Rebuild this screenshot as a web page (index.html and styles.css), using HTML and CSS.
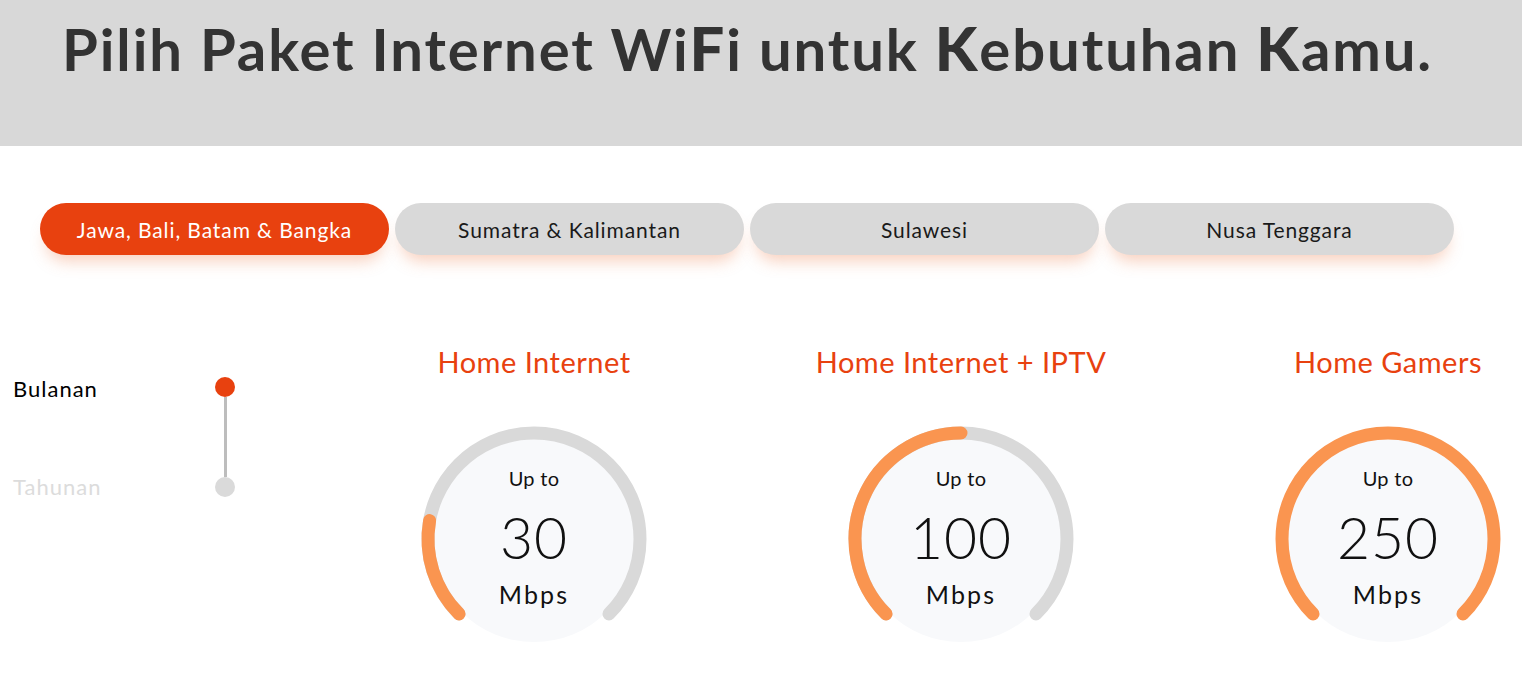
FILE: index.html
```html
<!DOCTYPE html>
<html lang="id">
<head>
<meta charset="utf-8">
<title>Pilih Paket Internet WiFi</title>
<link rel="stylesheet" href="styles.css">
</head>
<body>
<header class="hero">
  <h1 class="hero-title">Pilih Paket Internet Wi<span class="big">F</span>i untuk <span class="big">K</span>ebutuhan <span class="big">K</span>amu.</h1>
</header>

<nav class="tabs">
  <button class="tab tab-active">Jawa, Bali, Batam &amp; Bangka</button>
  <button class="tab">Sumatra &amp; Kalimantan</button>
  <button class="tab">Sulawesi</button>
  <button class="tab">Nusa Tenggara</button>
</nav>

<section class="plans">
  <div class="period">
    <div class="period-labels">
      <span class="period-label period-on">Bulanan</span>
      <span class="period-label period-off">Tahunan</span>
    </div>
    <div class="period-track">
      <span class="dot dot-on"></span>
      <span class="track-line"></span>
      <span class="dot dot-off"></span>
    </div>
  </div>

  <div class="plan">
    <h2 class="plan-title">Home Internet</h2>
    <div class="gauge">
      <svg class="gauge-svg" width="240" height="240" viewBox="0 0 240 240">
        <circle cx="120" cy="120" r="103" fill="#f8f9fb"/>
        <path d="M45.05 194.95 A106 106 0 1 1 194.95 194.95" fill="none" stroke="#d9d9d9" stroke-width="13" stroke-linecap="round"/>
        <path d="M45.05 194.95 A106 106 0 0 1 15.61 101.59" fill="none" stroke="#fa9550" stroke-width="13" stroke-linecap="round"/>
      </svg>
      <div class="gauge-text">
        <span class="upto">Up to</span>
        <span class="speed">30</span>
        <span class="unit">Mbps</span>
      </div>
    </div>
  </div>

  <div class="plan">
    <h2 class="plan-title">Home Internet + IPTV</h2>
    <div class="gauge">
      <svg class="gauge-svg" width="240" height="240" viewBox="0 0 240 240">
        <circle cx="120" cy="120" r="103" fill="#f8f9fb"/>
        <path d="M45.05 194.95 A106 106 0 1 1 194.95 194.95" fill="none" stroke="#d9d9d9" stroke-width="13" stroke-linecap="round"/>
        <path d="M45.05 194.95 A106 106 0 0 1 120 14" fill="none" stroke="#fa9550" stroke-width="13" stroke-linecap="round"/>
      </svg>
      <div class="gauge-text">
        <span class="upto">Up to</span>
        <span class="speed">100</span>
        <span class="unit">Mbps</span>
      </div>
    </div>
  </div>

  <div class="plan">
    <h2 class="plan-title">Home Gamers</h2>
    <div class="gauge">
      <svg class="gauge-svg" width="240" height="240" viewBox="0 0 240 240">
        <circle cx="120" cy="120" r="103" fill="#f8f9fb"/>
        <path d="M45.05 194.95 A106 106 0 1 1 194.95 194.95" fill="none" stroke="#fa9550" stroke-width="13" stroke-linecap="round"/>
      </svg>
      <div class="gauge-text">
        <span class="upto">Up to</span>
        <span class="speed">250</span>
        <span class="unit">Mbps</span>
      </div>
    </div>
  </div>
</section>
</body>
</html>
```

FILE: styles.css
```css
* { box-sizing: border-box; }

html, body {
  margin: 0;
  padding: 0;
  overflow: hidden;
  background: #ffffff;
  font-family: Lato, "Liberation Sans", sans-serif;
}

.hero {
  background: #d8d8d8;
  height: 146px;
  padding: 14px 0 0 62px;
}

.hero-title {
  margin: 0;
  font-size: 58px;
  line-height: 66px;
  font-weight: 700;
  letter-spacing: 1.9px;
  color: #333333;
  white-space: nowrap;
}

.hero-title .big {
  font-size: 1.06em;
  font-weight: 900;
}

.tabs {
  display: flex;
  gap: 6px;
  margin-top: 57px;
  padding-left: 40px;
}

.tab {
  width: 349px;
  height: 52px;
  border: none;
  border-radius: 26px;
  background: #d9d9d9;
  color: #1a1a1a;
  font-family: Lato, "Liberation Sans", sans-serif;
  font-size: 21px;
  letter-spacing: 0.9px;
  box-shadow: 0 12px 16px -6px rgba(236, 120, 70, 0.35);
}

.tab-active {
  background: #e8410f;
  color: #ffffff;
}

.plans {
  display: grid;
  grid-template-columns: 237px repeat(3, 260px);
  column-gap: 167px;
  margin-top: 90px;
}

.period {
  display: flex;
  margin-top: 32px;
  padding-left: 13px;
  height: 120px;
}

.period-labels {
  width: 202px;
  display: flex;
  flex-direction: column;
  justify-content: space-between;
  padding: 2px 0 0;
}

.period-label {
  font-size: 22px;
  line-height: 20px;
  letter-spacing: 1px;
}

.period-on { color: #000000; }
.period-off { color: #dcdcdc; }

.period-track {
  width: 20px;
  display: flex;
  flex-direction: column;
  align-items: center;
}

.dot {
  width: 20px;
  height: 20px;
  border-radius: 50%;
  flex: none;
}

.dot-on { background: #e8410f; }
.dot-off { background: #dadada; }

.track-line {
  width: 3px;
  flex: 1;
  background: #bdbdbd;
}

.plan {
  display: flex;
  flex-direction: column;
  align-items: center;
}

.plan-title {
  margin: 0;
  font-size: 29px;
  line-height: 34px;
  font-weight: 400;
  letter-spacing: 0.5px;
  white-space: nowrap;
  color: #e8410f;
}

.gauge {
  display: grid;
  margin-top: 40px;
  width: 240px;
  height: 240px;
}

.gauge-svg,
.gauge-text {
  grid-area: 1 / 1;
}

.gauge-text {
  display: flex;
  flex-direction: column;
  align-items: center;
  padding-top: 48px;
  color: #111111;
}

.upto {
  font-size: 20px;
  line-height: 22px;
  letter-spacing: 0.3px;
}

.speed {
  margin-top: 18px;
  font-size: 57px;
  line-height: 60px;
  font-weight: 300;
  letter-spacing: 1px;
}

.unit {
  margin-top: 12px;
  font-size: 25px;
  line-height: 30px;
  letter-spacing: 2.2px;
}
```
